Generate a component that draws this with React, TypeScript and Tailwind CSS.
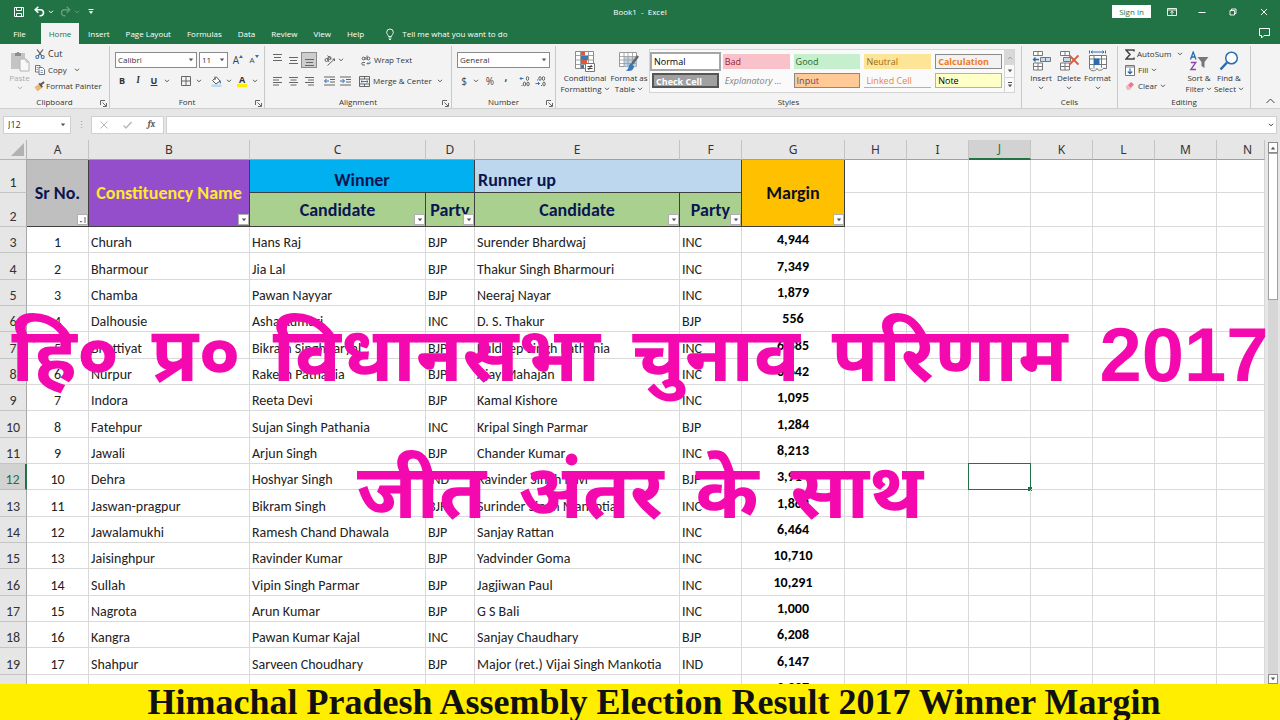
import type { ReactNode } from "react";

type Row = {
  no: number;
  seat: string;
  winner: string;
  winnerParty: string;
  runner: string;
  runnerParty: string;
  margin: string;
};

const ROWS: Row[] = [
  { no: 1, seat: "Churah", winner: "Hans Raj", winnerParty: "BJP", runner: "Surender Bhardwaj", runnerParty: "INC", margin: "4,944" },
  { no: 2, seat: "Bharmour", winner: "Jia Lal", winnerParty: "BJP", runner: "Thakur Singh Bharmouri", runnerParty: "INC", margin: "7,349" },
  { no: 3, seat: "Chamba", winner: "Pawan Nayyar", winnerParty: "BJP", runner: "Neeraj Nayar", runnerParty: "INC", margin: "1,879" },
  { no: 4, seat: "Dalhousie", winner: "Asha Kumari", winnerParty: "INC", runner: "D. S. Thakur", runnerParty: "BJP", margin: "556" },
  { no: 5, seat: "Bhattiyat", winner: "Bikram Singh Jaryal", winnerParty: "BJP", runner: "Kuldeep Singh Pathania", runnerParty: "INC", margin: "6,885" },
  { no: 6, seat: "Nurpur", winner: "Rakesh Pathania", winnerParty: "BJP", runner: "Ajay Mahajan", runnerParty: "INC", margin: "6,642" },
  { no: 7, seat: "Indora", winner: "Reeta Devi", winnerParty: "BJP", runner: "Kamal Kishore", runnerParty: "INC", margin: "1,095" },
  { no: 8, seat: "Fatehpur", winner: "Sujan Singh Pathania", winnerParty: "INC", runner: "Kripal Singh Parmar", runnerParty: "BJP", margin: "1,284" },
  { no: 9, seat: "Jawali", winner: "Arjun Singh", winnerParty: "BJP", runner: "Chander Kumar", runnerParty: "INC", margin: "8,213" },
  { no: 10, seat: "Dehra", winner: "Hoshyar Singh", winnerParty: "IND", runner: "Ravinder Singh Ravi", runnerParty: "BJP", margin: "3,914" },
  { no: 11, seat: "Jaswan-pragpur", winner: "Bikram Singh", winnerParty: "BJP", runner: "Surinder Singh Mankotia", runnerParty: "INC", margin: "1,862" },
  { no: 12, seat: "Jawalamukhi", winner: "Ramesh Chand Dhawala", winnerParty: "BJP", runner: "Sanjay Rattan", runnerParty: "INC", margin: "6,464" },
  { no: 13, seat: "Jaisinghpur", winner: "Ravinder Kumar", winnerParty: "BJP", runner: "Yadvinder Goma", runnerParty: "INC", margin: "10,710" },
  { no: 14, seat: "Sullah", winner: "Vipin Singh Parmar", winnerParty: "BJP", runner: "Jagjiwan Paul", runnerParty: "INC", margin: "10,291" },
  { no: 15, seat: "Nagrota", winner: "Arun Kumar", winnerParty: "BJP", runner: "G S Bali", runnerParty: "INC", margin: "1,000" },
  { no: 16, seat: "Kangra", winner: "Pawan Kumar Kajal", winnerParty: "INC", runner: "Sanjay Chaudhary", runnerParty: "BJP", margin: "6,208" },
  { no: 17, seat: "Shahpur", winner: "Sarveen Choudhary", winnerParty: "BJP", runner: "Major (ret.) Vijai Singh Mankotia", runnerParty: "IND", margin: "6,147" },
];

const COLUMNS = ["A", "B", "C", "D", "E", "F", "G", "H", "I", "J", "K", "L", "M", "N"];
const EMPTY_COLUMNS = ["H", "I", "J", "K", "L", "M", "N"];
const TABS = ["Insert", "Page Layout", "Formulas", "Data", "Review", "View", "Help"];

/* ---------- small shared pieces ---------- */

function Chevron({ className = "text-[#555]" }: { className?: string }) {
  return (
    <svg viewBox="0 0 6 4" className={`h-1 w-1.5 shrink-0 ${className}`} fill="none" stroke="currentColor">
      <path d="M1 .8 3 2.8 5 .8" />
    </svg>
  );
}

function Triangle() {
  return (
    <svg viewBox="0 0 6 4" className="h-1 w-1.5 shrink-0 text-[#555]">
      <path d="M.8.5h4.4L3 3.3z" fill="currentColor" />
    </svg>
  );
}

function Divider() {
  return <span className="h-4 w-px shrink-0 bg-[#d8d8d8]" />;
}

function IconButton({ label, className = "w-4", children }: { label: string; className?: string; children: ReactNode }) {
  return (
    <button aria-label={label} className={`flex h-4 shrink-0 items-center justify-center ${className}`}>
      {children}
    </button>
  );
}

function Group({ name, className, launcher, children }: { name: string; className: string; launcher?: boolean; children: ReactNode }) {
  return (
    <section className={`flex flex-col border-r border-[#c8c8c8] ${className}`}>
      <div className="h-[50px]">{children}</div>
      <div className="relative text-center text-[8px] leading-[12px] text-[#333]">
        {name}
        {launcher && (
          <button aria-label={`${name} settings`} className="absolute right-0.5 top-1">
            <svg viewBox="0 0 7 7" className="size-[7px]" fill="none" stroke="#666">
              <path d="M.5 5V.5H5M2.5 2.5 6 6M6.5 3v3.5H3" />
            </svg>
          </button>
        )}
      </div>
    </section>
  );
}

function BigButton({ lines, className, chevronBelow, muted, children }: { lines: string[]; className: string; chevronBelow?: boolean; muted?: boolean; children: ReactNode }) {
  return (
    <button className={`flex shrink-0 flex-col items-center text-[8px] leading-[11px] whitespace-nowrap ${muted ? "text-[#aaa]" : "text-[#333]"} ${className}`}>
      <span className="flex h-[22px] items-center">{children}</span>
      {lines.map((line, i) => (
        <span key={line} className="flex items-center gap-0.5">
          {line}
          {!chevronBelow && i === lines.length - 1 && <Chevron />}
        </span>
      ))}
      {chevronBelow && <Chevron className={muted ? "mt-[3px] text-[#aaa]" : "mt-[3px] text-[#555]"} />}
    </button>
  );
}

function Lines({ d, className = "size-[11px]" }: { d: string; className?: string }) {
  return (
    <svg viewBox="0 0 11 11" className={className} fill="none" stroke="#666">
      <path d={d} />
    </svg>
  );
}

/* ---------- title bar and tabs ---------- */

function TitleBar() {
  return (
    <header className="bg-[#217346] text-white">
      <div className="grid h-[23px] grid-cols-3 items-center text-[8px]">
        <div className="flex items-center pl-3.5">
          <button aria-label="Save">
            <svg viewBox="0 0 10 10" className="size-2.5" fill="none" stroke="white">
              <path d="M.5.5h9v9h-9zM2.5.5v3h5v-3M2.5 9.5v-3h5v3" />
            </svg>
          </button>
          <button aria-label="Undo" className="ml-2.5 flex items-center gap-[3px]">
            <svg viewBox="0 0 11 11" className="size-[11px]" fill="none" stroke="white" strokeWidth="1.6">
              <path d="M4.3.8 1.2 3.8l3.1 3M1.5 3.8h5a3 3 0 0 1 0 6H5.5" />
            </svg>
            <Chevron className="text-white" />
          </button>
          <button aria-label="Redo" className="ml-1.5 flex items-center gap-[3px] opacity-30">
            <svg viewBox="0 0 11 11" className="size-[11px]" fill="none" stroke="white" strokeWidth="1.4">
              <path d="m6.7.8 3.1 3-3.1 3M9.5 3.8h-5a3 3 0 0 0 0 6h1" />
            </svg>
            <Chevron className="text-white" />
          </button>
          <button aria-label="Customize toolbar" className="ml-2">
            <svg viewBox="0 0 6 6" className="size-1.5" fill="white">
              <path d="M.5 0h5v1h-5zM.8 2.3h4.4L3 5z" />
            </svg>
          </button>
        </div>
        <h1 className="text-center">Book1&nbsp; -&nbsp; Excel</h1>
        <div className="flex items-center justify-end pr-3">
          <button className="mr-4 h-[13px] w-[39px] bg-white text-[8px] text-[#217346]">Sign in</button>
          <button aria-label="Ribbon display options" className="mr-[21px]">
            <svg viewBox="0 0 10 8" className="h-2 w-2.5" fill="none" stroke="white" strokeWidth=".9">
              <path d="M.5.5h9v7h-9zM.5 2h9M5 6.8V3.4M3.4 4.8 5 3.2l1.6 1.6" />
            </svg>
          </button>
          <button aria-label="Minimize" className="mr-[23px]">
            <svg viewBox="0 0 8 8" className="size-2" stroke="white">
              <path d="M.5 4.5h7" />
            </svg>
          </button>
          <button aria-label="Restore" className="mr-[23px]">
            <svg viewBox="0 0 8 8" className="size-2" fill="none" stroke="white" strokeWidth=".9">
              <path d="M1 2.5h4.5V7H1zM2.5 2.5V1H7v4.5H5.5" />
            </svg>
          </button>
          <button aria-label="Close">
            <svg viewBox="0 0 8 8" className="size-2" stroke="white">
              <path d="m1 1 6 6M7 1 1 7" />
            </svg>
          </button>
        </div>
      </div>
      <nav className="flex h-[21px] items-stretch text-[8px]">
        <button className="w-[41px] pr-0.5">File</button>
        <button className="w-[38px] bg-[#f3f3f3] text-[#217346]">Home</button>
        <div className="flex gap-4 pl-[9px]">
          {TABS.map((tab) => (
            <button key={tab}>{tab}</button>
          ))}
        </div>
        <button className="ml-[22px] flex items-center gap-2">
          <svg viewBox="0 0 8 12" className="h-3 w-2" fill="none" stroke="white" strokeWidth=".9">
            <path d="M2.5 8.5c0-1.5-1.8-2-1.8-4.2a3.3 3.3 0 0 1 6.6 0c0 2.2-1.8 2.7-1.8 4.2zM2.5 10h3M3 11.5h2" />
          </svg>
          Tell me what you want to do
        </button>
        <button aria-label="Comments" className="ml-auto mr-2.5">
          <svg viewBox="0 0 11 11" className="size-[11px]" fill="none" stroke="white">
            <path d="M.5.5h10v7H5L2.5 10V7.5h-2z" />
          </svg>
        </button>
      </nav>
    </header>
  );
}

/* ---------- ribbon ---------- */

function ClipboardGroup() {
  return (
    <Group name="Clipboard" className="w-[110px]" launcher>
      <div className="flex pl-1.5">
        <BigButton lines={["Paste"]} className="w-[27px] pt-1" chevronBelow muted>
          <svg viewBox="0 0 20 22" className="h-[22px] w-5">
            <path d="M1 3h14v16H1z" fill="#c4c4c4" />
            <path d="M5 3h1.5a1.6 1.6 0 0 1 3 0H11v3H5z" fill="#8b8b8b" />
            <path d="M10 9h6l3 3v9h-9z" fill="#f8f8f8" stroke="#b4b4b4" />
            <path d="M16 9v3h3" fill="none" stroke="#b4b4b4" />
          </svg>
        </BigButton>
        <div className="flex flex-col text-[8px] leading-4 text-[#333]">
          <button className="flex h-4 items-center gap-[3px] pl-0.5 text-[9px]">
            <svg viewBox="0 0 10 10" className="size-2.5" fill="none">
              <path d="M2 .5 6.8 7M8 .5 3.2 7" stroke="#555" strokeWidth="1.2" />
              <circle cx="2.3" cy="8" r="1.5" stroke="#3a78b8" strokeWidth="1.1" />
              <circle cx="7.7" cy="8" r="1.5" stroke="#3a78b8" strokeWidth="1.1" />
            </svg>
            Cut
          </button>
          <button className="flex h-4 items-center gap-[3px] pl-0.5">
            <svg viewBox="0 0 10 10" className="size-2.5" fill="white" stroke="#666" strokeWidth=".9">
              <path d="M.5.5H5V7H.5z" />
              <path d="M4 2.5h3.5l2 2v5H4z" />
              <path d="M1.5 2.5h2M1.5 4.5H3M5.5 5.5H8M5.5 7.500H8" stroke="#3a78b8" strokeWidth=".7" />
            </svg>
            Copy
            <span className="ml-1"><Chevron /></span>
          </button>
          <button className="flex h-4 items-center gap-px whitespace-nowrap pl-px">
            <svg viewBox="0 0 11 11" className="size-[11px]">
              <path d="M.5 6 5 3l3 4-4.5 3.5z" fill="#e9b872" />
              <path d="m4.5 2.8 1.5-1 3 4-1.5 1z" fill="#555" />
              <path d="M7 3.5 10 1" stroke="#555" strokeWidth="1.8" />
            </svg>
            Format Painter
          </button>
        </div>
      </div>
    </Group>
  );
}

function FontGroup() {
  return (
    <Group name="Font" className="w-[155px]" launcher>
      <div className="flex items-center pl-[5px] pt-1.5">
        <button aria-label="Font name" className="flex h-4 w-[82px] items-center justify-between border border-[#8a8a8a] bg-white px-0.5 text-[8px] text-[#333]">
          Calibri
          <Triangle />
        </button>
        <button aria-label="Font size" className="ml-0.5 flex h-4 w-[29px] items-center justify-between border border-[#8a8a8a] bg-white px-0.5 text-[8px] text-[#333]">
          11
          <Triangle />
        </button>
        <IconButton label="Grow font" className="ml-0.5 w-4 text-[10px] text-[#444]">
          A<svg viewBox="0 0 4 3" className="mb-2 h-[3px] w-1"><path d="M0 3h4L2 0z" fill="#3a6ea5" /></svg>
        </IconButton>
        <IconButton label="Shrink font" className="w-4 text-[8px] text-[#444]">
          A<svg viewBox="0 0 4 3" className="mb-2 h-[3px] w-1"><path d="M0 0h4L2 3z" fill="#3a6ea5" /></svg>
        </IconButton>
      </div>
      <div className="flex items-center pl-1 pt-[5px] text-[9px] text-[#333]">
        <IconButton label="Bold"><b>B</b></IconButton>
        <IconButton label="Italic"><i className="font-serif font-semibold">I</i></IconButton>
        <IconButton label="Underline"><b className="underline">U</b></IconButton>
        <IconButton label="Underline options" className="w-2.5"><Chevron /></IconButton>
        <span className="mx-[3px]"><Divider /></span>
        <IconButton label="Borders">
          <svg viewBox="0 0 10 10" className="size-2.5" fill="none" stroke="#666"><path d="M.5.5h9v9h-9zM5 .5v9M.5 5h9" /></svg>
        </IconButton>
        <IconButton label="Border options" className="w-2.5"><Chevron /></IconButton>
        <span className="mx-0.5"><Divider /></span>
        <IconButton label="Fill color">
          <svg viewBox="0 0 11 11" className="size-[11px]">
            <path d="M1.5 4.5 5.5 1 9 5 5 8z" fill="white" stroke="#555" />
            <path d="M4 4V.5" stroke="#555" />
            <path d="M9 4c1 1.500 1.500 3 .5 3.500S8.500 6 9 4z" fill="#3a78b8" />
            <path d="M.5 8.500h10V11H.5z" fill="#bdd7ee" />
          </svg>
        </IconButton>
        <IconButton label="Fill options" className="w-2.5"><Chevron /></IconButton>
        <IconButton label="Font color">
          <span className="border-b-[3px] border-[#ffee00] px-0.5 text-[9px] leading-[9px] font-bold">A</span>
        </IconButton>
        <IconButton label="Font color options" className="w-2.5"><Chevron /></IconButton>
      </div>
    </Group>
  );
}

function AlignmentGroup() {
  return (
    <Group name="Alignment" className="w-[187px]" launcher>
      <div className="flex items-center pl-1 pt-1.5 text-[8px] text-[#333]">
        <IconButton label="Top align"><Lines d="M1 1.5h9M2 4.5h7M1 7.5h9" className="mb-1 size-[11px]" /></IconButton>
        <IconButton label="Middle align"><Lines d="M1 2.5h9M2 5.5h7M1 8.5h9" /></IconButton>
        <IconButton label="Bottom align" className="w-4 border border-[#8a8a8a] bg-[#cdcdcd]">
          <Lines d="M1 4.5h9M2 7.5h7M1 10.5h9" />
        </IconButton>
        <span className="mx-0.5"><Divider /></span>
        <IconButton label="Orientation">
          <svg viewBox="0 0 11 11" className="size-[11px]" fill="none" stroke="#555" strokeWidth=".9">
            <circle cx="2.5" cy="5" r="1.5" />
            <circle cx="5.5" cy="3" r="1.5" />
            <path d="M3.5 3.5 5 7M3.5.5l3.500 4M3.5 10.5l7-6.500M8.500 4h2v2" />
          </svg>
        </IconButton>
        <IconButton label="Orientation options" className="w-2"><Chevron /></IconButton>
        <span className="mr-1.5 ml-2.5"><Divider /></span>
        <button className="flex h-4 items-center gap-[3px]">
          <svg viewBox="0 0 10 11" className="h-[11px] w-2.5" fill="none" stroke="#555" strokeWidth=".9">
            <circle cx="2.5" cy="3.5" r="1.4" />
            <path d="M4 2v3M6 .5V5" />
            <circle cx="7.5" cy="3.5" r="1.4" />
            <path d="M4 7.5H2a1.2 1.2 0 0 0 0 2.5h2" />
            <path d="M9 6.5v2H6M7.2 7.3 6 8.5l1.200 1.200" stroke="#3a78b8" />
          </svg>
          Wrap Text
        </button>
      </div>
      <div className="flex items-center pl-1 pt-[5px] text-[8px] text-[#333]">
        <IconButton label="Align left"><Lines d="M1 1.5h9M1 4h6M1 6.5h9M1 9h6" /></IconButton>
        <IconButton label="Center"><Lines d="M1 1.5h9M2.5 4h6M1 6.5h9M2.5 9h6" /></IconButton>
        <IconButton label="Align right"><Lines d="M1 1.5h9M4 4h6M1 6.5h9M4 9h6" /></IconButton>
        <span className="mx-0.5"><Divider /></span>
        <IconButton label="Decrease indent">
          <svg viewBox="0 0 11 11" className="size-[11px]" fill="none" stroke="#666">
            <path d="M0 1h11M6 3.5h5M6 6h5M0 9h11" />
            <path d="M5 5H.8M2.5 3 .5 5l2 2" stroke="#2b6cb0" />
          </svg>
        </IconButton>
        <IconButton label="Increase indent">
          <svg viewBox="0 0 11 11" className="size-[11px]" fill="none" stroke="#666">
            <path d="M0 1h11M6 3.5h5M6 6h5M0 9h11" />
            <path d="M0 5h4.2M2.5 3l2 2-2 2" stroke="#2b6cb0" />
          </svg>
        </IconButton>
        <span className="mr-1 ml-0.5"><Divider /></span>
        <button className="flex h-4 items-center gap-[3px] whitespace-nowrap">
          <svg viewBox="0 0 11 11" className="size-[11px]" fill="none" stroke="#666">
            <path d="M.5.5h10v10H.5zM.5 3h10M.5 8h10M5.5.5V3M5.5 8v2.5" />
            <path d="M2 5.5h7M3.3 4.3 2 5.5l1.300 1.200M7.700 4.300 9 5.500 7.700 6.700" stroke="#2b6cb0" strokeWidth=".9" />
          </svg>
          Merge &amp; Center
          <span className="ml-0.5"><Chevron /></span>
        </button>
      </div>
    </Group>
  );
}

function NumberGroup() {
  return (
    <Group name="Number" className="w-[104px]" launcher>
      <div className="flex px-[5px] pt-1.5">
        <button aria-label="Number format" className="flex h-4 flex-1 items-center justify-between border border-[#8a8a8a] bg-white px-0.5 text-[8px] text-[#333]">
          General
          <Triangle />
        </button>
      </div>
      <div className="flex items-center pl-1 pt-[5px] text-[10px] text-[#444]">
        <IconButton label="Currency">$</IconButton>
        <IconButton label="Currency options" className="w-2"><Chevron /></IconButton>
        <IconButton label="Percent" className="w-5">%</IconButton>
        <IconButton label="Comma style" className="w-3"><b className="pb-2">,</b></IconButton>
        <span className="mx-0.5"><Divider /></span>
        <IconButton label="Increase decimal">
          <svg viewBox="0 0 11 11" className="size-[11px]" fill="none" stroke="#555" strokeWidth=".9">
            <path d="M4.5 2.5H1M2.5 1 1 2.500 2.500 4" stroke="#2b6cb0" />
            <ellipse cx="8.5" cy="2.5" rx="1.2" ry="1.9" />
            <ellipse cx="5.5" cy="8" rx="1.2" ry="1.9" />
            <ellipse cx="9" cy="8" rx="1.2" ry="1.9" />
            <path d="M2.5 9.5h1" />
          </svg>
        </IconButton>
        <IconButton label="Decrease decimal">
          <svg viewBox="0 0 11 11" className="size-[11px]" fill="none" stroke="#555" strokeWidth=".9">
            <ellipse cx="5" cy="2.5" rx="1.2" ry="1.9" />
            <ellipse cx="8.5" cy="2.5" rx="1.2" ry="1.9" />
            <ellipse cx="9" cy="8" rx="1.2" ry="1.9" />
            <path d="M2 4h1M6 9.5h1" />
            <path d="M.5 7.5h4M3 6l1.500 1.500L3 9" stroke="#2b6cb0" />
          </svg>
        </IconButton>
      </div>
    </Group>
  );
}

const STYLE_CELLS = [
  { name: "Normal", look: "bg-white text-black outline-2 outline-[#a6a6a6]" },
  { name: "Bad", look: "bg-[#f9c2cb] text-[#a3202e]" },
  { name: "Good", look: "bg-[#c6efce] text-[#1f6b2a]" },
  { name: "Neutral", look: "bg-[#fce597] text-[#9c6a10]" },
  { name: "Calculation", look: "border border-[#8a8a8a] bg-[#f2f2f2] font-bold text-[#ee7d20]" },
  { name: "Check Cell", look: "border-2 border-[#555] bg-[#a0a0a0] font-bold text-white" },
  { name: "Explanatory ...", look: "italic text-[#7f7f7f]" },
  { name: "Input", look: "border border-[#8a8a8a] bg-[#ffca96] text-[#5b4a78]" },
  { name: "Linked Cell", look: "border-b border-[#e9a75a] text-[#ee8432]" },
  { name: "Note", look: "border border-[#b2b2b2] bg-[#ffffc8] text-black" },
];

function StylesGroup() {
  return (
    <Group name="Styles" className="flex-1">
      <div className="flex pl-1">
        <BigButton lines={["Conditional", "Formatting"]} className="w-[50px] pt-1">
          <svg viewBox="0 0 20 21" className="h-[21px] w-5">
            <path d="M.5.5h18v17H.5z" fill="white" stroke="#8a8a8a" />
            <path d="M.5 4.5h18M.5 9h18M.5 13.5h18M5.5.5v17M13.5.5v17" stroke="#8a8a8a" strokeWidth=".8" />
            <path d="M6 1h4v3.5H6zM6 9h6v4H6z" fill="#d9593c" />
            <path d="M6 5h7v4H6zM6 14h3v3.5H6z" fill="#3a78b8" />
            <path d="M10.5 12.5h9v8h-9z" fill="white" stroke="#777" />
            <path d="M12.5 15.5h5M12.5 17.5h5M16.5 14l-3 5" stroke="#333" strokeWidth=".9" />
          </svg>
        </BigButton>
        <BigButton lines={["Format as", "Table"]} className="w-[38px] pt-1">
          <svg viewBox="0 0 20 21" className="h-[21px] w-5">
            <path d="M.5 1.5h17v14H.5z" fill="white" stroke="#999" />
            <path d="M5 5.5h12.500v10H5z" fill="#bcd3ea" />
            <path d="M.5 5.5h17M.5 9h17M.5 12.5h17M5 1.5v14M9 1.5v14M13.5 1.5v14" stroke="#999" strokeWidth=".8" />
            <path d="m19 5-6 8" stroke="#666" strokeWidth="2.5" />
            <path d="M12.5 12.5c-2 0-2.500 2-3 4-.3 1.500-1.500 2.500-3 3 4 1 8 .5 8.500-4z" fill="#3a78b8" />
          </svg>
        </BigButton>
        <div className="ml-px mr-1.5 mt-[3px] flex h-11 flex-1 border border-[#d4d4d4] bg-[#fafafa]">
          <div className="grid flex-1 grid-cols-5 content-start gap-x-1 gap-y-1 px-0.5 pt-1">
            {STYLE_CELLS.map((s) => (
              <button key={s.name} className={`h-[15px] overflow-hidden pl-0.5 text-left text-[9px] leading-[13px] whitespace-nowrap ${s.look}`}>
                {s.name}
              </button>
            ))}
          </div>
          <div className="flex w-2.5 flex-col border-l border-[#d4d4d4]">
            <button aria-label="Previous styles" className="flex h-[15px] items-center justify-center bg-[#d8d8d8]"><Chevron className="rotate-180 text-[#999]" /></button>
            <button aria-label="Next styles" className="flex h-[13px] items-center justify-center border-b border-[#d4d4d4]"><Triangle /></button>
            <button aria-label="More styles" className="flex flex-1 flex-col items-center justify-center">
              <span className="mb-px h-px w-1 bg-[#555]" />
              <Triangle />
            </button>
          </div>
        </div>
      </div>
    </Group>
  );
}

function CellsGroup() {
  return (
    <Group name="Cells" className="w-[96px]">
      <div className="flex pl-[5px]">
        <BigButton lines={["Insert"]} className="w-7 pt-1" chevronBelow>
          <svg viewBox="0 0 19 20" className="h-5 w-[19px]" fill="white" stroke="#777">
            <path d="M1.5.5h9v4h-9zM6 .5v4M1.5 12h9v7h-9zM6 12v7M1.5 15.5h9" />
            <path d="M8.5 6.5h10v4h-10zM13.5 6.5v4" fill="#c9dcee" />
            <path d="M7 8.5H1.5M3.5 6.5l-2 2 2 2" fill="none" stroke="#2b6cb0" strokeWidth="1.3" />
          </svg>
        </BigButton>
        <BigButton lines={["Delete"]} className="w-7 pt-1" chevronBelow>
          <svg viewBox="0 0 20 20" className="size-5" fill="white" stroke="#777">
            <path d="M1.5.5h9v4h-9zM6 .5v4M1.5 12h9v7h-9zM6 12v7M1.5 15.5h9" />
            <path d="M4.5 6.5h7v4h-7z" fill="#c9dcee" />
            <path d="m10.5 4.5 9 9M19.5 4.5l-9 9" stroke="#d9593c" strokeWidth="1.8" />
          </svg>
        </BigButton>
        <BigButton lines={["Format"]} className="w-[29px] pt-1" chevronBelow>
          <svg viewBox="0 0 20 22" className="h-[22px] w-5" fill="white" stroke="#777">
            <path d="M1.5 5.5h17v13h-17zM1.5 9h17M1.5 14.5h17M6 5.5v13M13.5 5.5v13" />
            <path d="M6 8.5h5.500V15H6z" fill="#2b6cb0" stroke="none" />
            <path d="M2 18.5c0 3 6 3 7 0 1 3 6 2 7-1" fill="#f3f3f3" />
            <path d="M1.5.5v3M17.5.5v3M3 2h13M4.5.7 3 2l1.500 1.300M14.500.7 16 2l-1.500 1.300" fill="none" stroke="#2b6cb0" />
          </svg>
        </BigButton>
      </div>
    </Group>
  );
}

function EditingGroup() {
  return (
    <Group name="Editing" className="w-[133px]">
      <div className="flex pl-[7px]">
        <div className="flex w-[58px] flex-col text-[8px] text-[#333]">
          <button className="flex h-4 items-center gap-0.5">
            <svg viewBox="0 0 10 11" className="h-[11px] w-2.5" fill="none" stroke="#444" strokeWidth="1.5">
              <path d="M9 2.5V1H1l4 4.500L1 10h8V8.500" />
            </svg>
            AutoSum
            <span className="ml-auto"><Chevron /></span>
          </button>
          <button className="flex h-4 items-center gap-[3px]">
            <svg viewBox="0 0 10 11" className="h-[11px] w-2.5" fill="white" stroke="#777">
              <path d="M.5.5h9v10h-9z" />
              <path d="M1 1h8v2H1z" fill="#bbb" stroke="none" />
              <path d="M5 3.5v5M2.8 6.5 5 8.700l2.200-2.200" fill="none" stroke="#2b6cb0" strokeWidth="1.2" />
            </svg>
            Fill
            <Chevron />
          </button>
          <button className="flex h-4 items-center gap-[3px]">
            <svg viewBox="0 0 10 10" className="size-2.5">
              <path d="m1 6 5-5 3 2.500-5 5.500H2.500z" fill="#e8798f" />
              <path d="m1 6 2-2 3 3-2 2H2.500z" fill="#f4b6c2" />
            </svg>
            Clear
            <Chevron />
          </button>
        </div>
        <BigButton lines={["Sort &", "Filter"]} className="w-8 pt-1">
          <svg viewBox="0 0 20 20" className="size-5" fill="none">
            <path d="M1.5 8.5 4.2 1 7 8.500M2.300 6h3.800" stroke="#2b6cb0" strokeWidth="1.3" />
            <path d="M1.8 11.5h5l-5 7H7" stroke="#8e44ad" strokeWidth="1.3" />
            <path d="M8.5 6h11l-4 5v6l-3-2v-4z" fill="#777" />
          </svg>
        </BigButton>
        <BigButton lines={["Find &", "Select"]} className="w-7 pt-1">
          <svg viewBox="0 0 20 20" className="size-5" fill="none" stroke="#2b6cb0">
            <circle cx="12.5" cy="7" r="5.8" strokeWidth="1.5" fill="white" />
            <path d="m8 11.5-6.500 7" strokeWidth="2.5" />
          </svg>
        </BigButton>
      </div>
    </Group>
  );
}

function Ribbon() {
  return (
    <div className="flex items-start border-b border-b-[#d0d0d0] bg-[#f3f3f3] pt-0.5">
      <ClipboardGroup />
      <FontGroup />
      <AlignmentGroup />
      <NumberGroup />
      <StylesGroup />
      <CellsGroup />
      <EditingGroup />
      <div className="flex w-[29px] items-end justify-center self-stretch pb-1 pl-2.5">
        <button aria-label="Collapse ribbon">
          <svg viewBox="0 0 9 6" className="h-1.5 w-[9px]" fill="none" stroke="#444">
            <path d="m.5 5 4-4 4 4" />
          </svg>
        </button>
      </div>
    </div>
  );
}

function FormulaBar() {
  return (
    <div className="flex items-center bg-[#e6e6e6] px-[3px] pt-[7px] pb-1.5">
      <div className="flex h-[18px] w-[68px] items-center border border-[#cfcfcf] bg-white px-1">
        <input aria-label="Name box" defaultValue="J12" className="w-full min-w-0 text-[9px] text-[#333] outline-none" />
        <Triangle />
      </div>
      <span className="w-5 text-center text-[9px] text-[#999]">⋮</span>
      <div className="flex h-[18px] w-[73px] items-center justify-around border border-[#cfcfcf] bg-white">
        <button aria-label="Cancel">
          <svg viewBox="0 0 8 8" className="size-2" stroke="#b4b4b4"><path d="m.5.5 7 7M7.5.5l-7 7" /></svg>
        </button>
        <button aria-label="Enter">
          <svg viewBox="0 0 9 8" className="h-2 w-[9px]" fill="none" stroke="#b4b4b4" strokeWidth="1.3"><path d="M.5 4.500 3 7l5.500-6" /></svg>
        </button>
        <button aria-label="Insert function" className="font-serif text-[9px] font-bold text-[#555] italic">fx</button>
      </div>
      <div className="ml-0.5 flex h-[18px] flex-1 items-center border border-[#cfcfcf] bg-white pr-0.5">
        <input aria-label="Formula" className="min-w-0 flex-1 text-[9px] outline-none" />
        <Chevron className="text-[#333]" />
      </div>
    </div>
  );
}

/* ---------- worksheet ---------- */

function FilterButton({ label, sorted }: { label: string; sorted?: boolean }) {
  return (
    <button aria-label={label} className="absolute right-0 bottom-px flex size-[11px] items-center justify-center border border-[#b0b0b0] bg-white">
      {sorted ? (
        <svg viewBox="0 0 8 8" className="size-2" fill="none" stroke="#666">
          <path d="M.5 5h3L2 6.8z" fill="#666" stroke="none" />
          <path d="M6 1v6" />
        </svg>
      ) : (
        <Triangle />
      )}
    </button>
  );
}

function RowNumber({ n, active }: { n?: number; active?: boolean }) {
  return (
    <th
      scope="row"
      className={`border-r border-b text-[14px] leading-[18px] align-bottom font-normal ${
        active ? "border-r-2 border-r-[#217346] border-b-[#bbb] bg-[#d2d2d2] text-[#217346]" : "border-r-[#a8a8a8] border-b-[#c4c4c4] bg-[#e6e6e6] text-[#333]"
      }`}
    >
      {n}
    </th>
  );
}

const CELL = "border-r border-b border-[#d9d9d9] px-0.5 align-bottom";
const HEAD = "relative border-r border-b border-[#3f3f3f]";
const MARGIN = "border-r border-b border-[#d9d9d9] pb-[3px] text-center align-bottom font-bold text-black";

function Sheet() {
  return (
    <table className="w-full table-fixed border-separate border-spacing-0 bg-white font-['Carlito','Lato',sans-serif] text-[14px] leading-[18px] whitespace-nowrap text-[#222]">
      <colgroup>
        <col className="w-[27px]" />
        <col className="w-[62px]" />
        <col className="w-[161px]" />
        <col className="w-[176px]" />
        <col className="w-[49px]" />
        <col className="w-[205px]" />
        <col className="w-[62px]" />
        <col className="w-[103px]" />
        <col className="w-[62px]" />
        <col className="w-[62px]" />
        <col className="w-[62px]" />
        <col className="w-[62px]" />
        <col className="w-[62px]" />
        <col className="w-[62px]" />
        <col />
      </colgroup>
      <thead>
        <tr className="h-5 bg-[#e6e6e6] font-['Noto_Sans',sans-serif] text-[12px] text-[#333]">
          <td className="border-r border-b border-[#b4b4b4]">
            <svg viewBox="0 0 13 13" className="ml-auto mr-0.5 size-[13px]">
              <path d="M13 0v13H0z" fill="#b2b2b2" />
            </svg>
          </td>
          {COLUMNS.map((c) => (
            <th
              key={c}
              scope="col"
              className={`border-r font-normal ${c === "N" ? "pl-3.5" : ""} ${
                c === "J" ? "border-b-2 border-r-[#c4c4c4] border-b-[#217346] bg-[#d2d2d2] text-[#217346]" : "border-b border-r-[#c4c4c4] border-b-[#a0a0a0]"
              }`}
            >
              {c}
            </th>
          ))}
        </tr>
      </thead>
      <tbody>
        <tr className="h-[33px] text-[18px] text-[#0b1550]">
          <RowNumber n={1} />
          <th rowSpan={2} className={`${HEAD} bg-[#bfbfbf]`}>
            Sr No.
            <FilterButton label="Sort Sr No." sorted />
          </th>
          <th rowSpan={2} className={`${HEAD} bg-[#954ecb] text-[#ffe92e]`}>
            Constituency Name
            <FilterButton label="Filter Constituency Name" />
          </th>
          <th colSpan={2} className={`${HEAD} bg-[#00b0f0] pt-2`}>Winner</th>
          <th colSpan={2} className={`${HEAD} bg-[#bdd7ee] pt-2 pl-[3px] text-left`}>Runner up</th>
          <th rowSpan={2} className={`${HEAD} bg-[#ffc000] text-[#0b1020]`}>
            Margin
            <FilterButton label="Filter Margin" />
          </th>
          {EMPTY_COLUMNS.map((c) => (
            <td key={c} className={CELL} />
          ))}
        </tr>
        <tr className="h-[34px] text-[18px] text-[#0b1550]">
          <RowNumber n={2} />
          {["Candidate", "Party", "Candidate", "Party"].map((name, i) => (
            <th key={i} className={`${HEAD} bg-[#a9d08e]`}>
              {name}
              <FilterButton label={`Filter ${name}`} />
            </th>
          ))}
          {EMPTY_COLUMNS.map((c) => (
            <td key={c} className={CELL} />
          ))}
        </tr>
        {ROWS.map((r, i) => (
          <tr key={r.no} className={i % 3 === 1 ? "h-[27px]" : "h-[26px]"}>
            <RowNumber n={r.no + 2} active={r.no === 10} />
            <td className={`${CELL} text-center`}>{r.no}</td>
            <td className={CELL}>{r.seat}</td>
            <td className={CELL}>{r.winner}</td>
            <td className={CELL}>{r.winnerParty}</td>
            <td className={CELL}>{r.runner}</td>
            <td className={CELL}>{r.runnerParty}</td>
            <td className={MARGIN}>{r.margin}</td>
            {EMPTY_COLUMNS.map((c) => (
              <td key={c} className={`${CELL} relative`}>
                {c === "J" && r.no === 10 && (
                  <span className="absolute -inset-px border border-[#217346]">
                    <span className="absolute -right-0.5 -bottom-0.5 size-1 bg-[#217346]" />
                  </span>
                )}
              </td>
            ))}
          </tr>
        ))}
        <tr className="h-[26px]">
          <RowNumber />
          {["A", "B", "C", "D", "E", "F"].map((c) => (
            <td key={c} className={CELL} />
          ))}
          <td className={MARGIN}>2,997</td>
          {EMPTY_COLUMNS.map((c) => (
            <td key={c} className={CELL} />
          ))}
        </tr>
      </tbody>
    </table>
  );
}

function ScrollBar() {
  return (
    <div className="flex w-[15px] shrink-0 flex-col bg-[#e6e6e6] pt-0.5 pr-0.5 pl-[3px]">
      <button aria-label="Scroll up" className="flex h-[11px] items-center justify-center border border-[#8a8a8a] bg-white">
        <span className="rotate-180"><Triangle /></span>
      </button>
      <div className="flex-1 bg-[#d6d6d6]">
        <div className="h-[147px] border border-[#a0a0a0] bg-white" />
      </div>
      <button aria-label="Scroll down" className="flex h-2.5 items-center justify-center border border-[#8a8a8a] bg-white">
        <Triangle />
      </button>
    </div>
  );
}

const HEADLINE = [
  ["हि०", "प्र०", "विधानसभा", "चुनाव", "परिणाम"],
  ["जीत", "अंतर", "के", "साथ"],
];

function Headline() {
  return (
    <div className="pointer-events-none absolute inset-x-0 top-[146px] font-['Noto_Sans_Devanagari','Noto_Sans',sans-serif] text-[76px] leading-[137px] font-bold whitespace-nowrap text-[#f409ae]">
      <p className="flex items-baseline justify-center gap-8">
        {HEADLINE[0].map((word) => (
          <span key={word}>{word}</span>
        ))}
        <span className="font-['Liberation_Sans',sans-serif]">2017</span>
      </p>
      <p className="flex items-baseline justify-center gap-8">
        {HEADLINE[1].map((word) => (
          <span key={word}>{word}</span>
        ))}
      </p>
    </div>
  );
}

export default function App() {
  return (
    <div className="flex h-screen flex-col overflow-hidden bg-[#e6e6e6] font-['Open_Sans',sans-serif]">
      <TitleBar />
      <Ribbon />
      <FormulaBar />
      <main className="relative flex min-h-0 flex-1">
        <div className="min-w-0 flex-1 overflow-hidden">
          <Sheet />
        </div>
        <ScrollBar />
        <Headline />
      </main>
      <footer className="flex h-9 shrink-0 items-center justify-center bg-[#ffee00] pl-7 font-['Liberation_Serif',serif] text-[36px] leading-9 font-bold whitespace-nowrap text-[#111]">
        Himachal Pradesh Assembly Election Result 2017 Winner Margin
      </footer>
    </div>
  );
}
